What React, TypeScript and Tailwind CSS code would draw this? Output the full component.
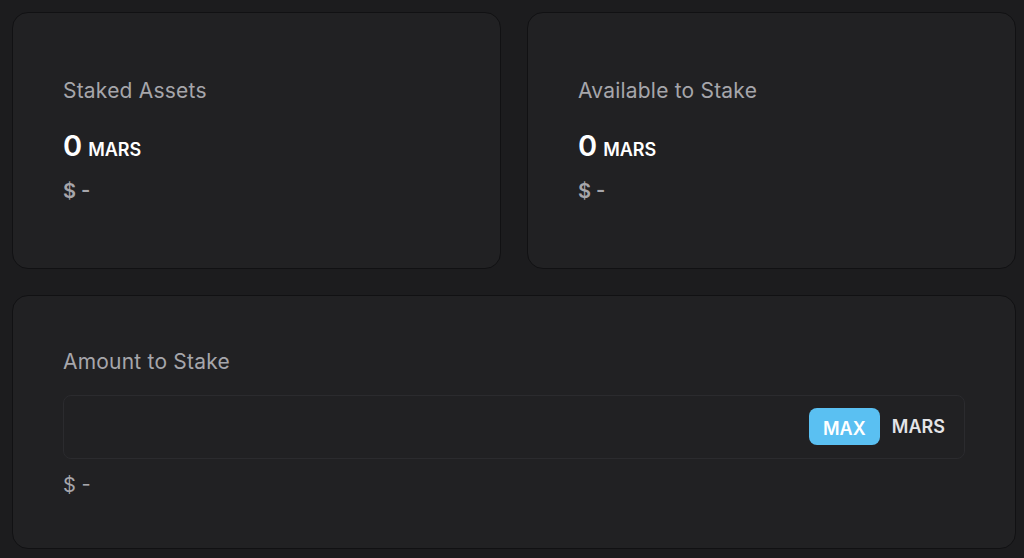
import React from 'react';

const font = { fontFamily: 'Inter, "Noto Sans", sans-serif' };

function StatCard({ title }: { title: string }) {
  return (
    <div className="flex h-[257px] flex-1 flex-col justify-center rounded-2xl border border-[#111113] bg-[#212123] px-[50px]">
      <p className="text-[21px] leading-[28px] tracking-[0.01em] text-[#a6a6ab]">{title}</p>
      <div className="mt-[24px] flex items-baseline gap-[6px]">
        <span className="text-[29px] font-semibold leading-[34px] text-white">0</span>
        <span className="text-[18px] font-semibold text-white">MARS</span>
      </div>
      <p className="mt-[14px] text-[20px] font-semibold leading-[28px] text-[#a6a6ab]">$ -</p>
    </div>
  );
}

export default function App() {
  return (
    <div className="bg-[#1c1c1e] pb-[9px] pl-[12px] pr-[8px] pt-[12px]" style={font}>
      <div className="flex gap-[26px]">
        <StatCard title="Staked Assets" />
        <StatCard title="Available to Stake" />
      </div>

      <div className="mt-[26px] flex h-[254px] flex-col justify-center rounded-2xl border border-[#111113] bg-[#212123] px-[50px]">
        <p className="translate-y-[2px] text-[21px] leading-[28px] tracking-[0.01em] text-[#a6a6ab]">Amount to Stake</p>
        <div className="mt-[21px] flex h-[64px] items-center justify-end gap-[12px] rounded-lg border border-[#2b2b2e] bg-[#212123] pr-[19px]">
          <button className="flex h-[37px] w-[71px] items-center justify-center rounded-lg bg-[#5ac0f2] pt-[3px] text-[18px] font-semibold text-white">
            MAX
          </button>
          <span className="text-[18px] font-semibold text-[#e4e4e7]">MARS</span>
        </div>
        <p className="mt-[12px] text-[20px] leading-[28px] text-[#a6a6ab]">$ -</p>
      </div>
    </div>
  );
}
